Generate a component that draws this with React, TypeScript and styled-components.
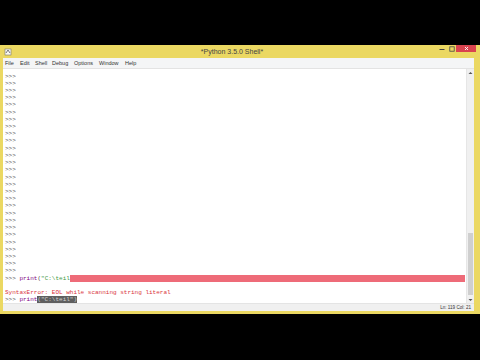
import React from "react";
import styled, { createGlobalStyle } from "styled-components";

const Global = createGlobalStyle`
  html, body { margin: 0; padding: 0; background: #000; }
  body { width: 480px; height: 360px; overflow: hidden; font-family: "Liberation Sans", Arial, sans-serif; }
`;

const Screen = styled.div`
  width: 480px;
  height: 360px;
  background: #000;
  display: flex;
  flex-direction: column;
  padding-top: 45px;
  box-sizing: border-box;
`;

const Window = styled.div`
  height: 269px;
  background: #ebd862;
  display: flex;
  flex-direction: column;
  padding: 0 6px 3px 3px;
  box-sizing: border-box;
`;

const TitleBar = styled.div`
  height: 13px;
  display: flex;
  align-items: center;
  flex: none;
`;

const Title = styled.div`
  flex: 1;
  text-align: center;
  font-size: 7px;
  color: #444;
  padding-left: 16px;
`;

const Controls = styled.div`
  display: flex;
  align-items: flex-start;
  height: 13px;
  margin-right: -2px;
`;

const CtlBtn = styled.div<{ $w: number; $red?: boolean }>`
  width: ${(p) => p.$w}px;
  height: 7px;
  background: ${(p) => (p.$red ? "#d9434f" : "transparent")};
  display: flex;
  align-items: center;
  justify-content: center;
`;

const Menu = styled.div`
  height: 11px;
  background: #f4f5f6;
  border-bottom: 1px solid #e3e3e3;
  display: flex;
  align-items: center;
  padding-left: 2px;
  box-sizing: border-box;
  flex: none;
`;

const MenuItem = styled.span<{ $w: number }>`
  width: ${(p) => p.$w}px;
  font-size: 5.5px;
  color: #333;
`;

const Body = styled.div`
  flex: 1;
  display: flex;
  background: #fff;
  min-height: 0;
`;

const Text = styled.div`
  flex: 1;
  padding: 3.5px 0 0 2px;
  font-family: "Liberation Mono", "Courier New", monospace;
  font-size: 6px;
  line-height: 7.22px;
  color: #4a4a4a;
  overflow: hidden;
  white-space: pre;
`;

const Line = styled.div`
  height: 7.22px;
  display: flex;
`;

const Err = styled.span`
  flex: 1;
  background: #ee6b78;
  margin-right: 1px;
`;

const Kw = styled.span`
  color: #800080;
`;
const Str = styled.span`
  color: #3f9a3f;
`;
const Red = styled.span`
  color: #d9323a;
`;
const Sel = styled.span`
  background: #5f5f5f;
  color: #d0d0d0;
`;

const Scroll = styled.div`
  width: 7px;
  background: #f0f0f0;
  display: flex;
  flex-direction: column;
  align-items: center;
  border-left: 1px solid #e6e6e6;
`;

const Arrow = styled.div`
  height: 7px;
  display: flex;
  align-items: center;
  justify-content: center;
`;

const Thumb = styled.div`
  width: 5px;
  height: 62px;
  background: #cfcfcf;
  margin-top: auto;
  margin-bottom: 1px;
`;

const Status = styled.div`
  height: 8px;
  background: #f0f0f0;
  display: flex;
  align-items: center;
  justify-content: flex-end;
  padding-right: 3px;
  font-size: 4.6px;
  color: #333;
  flex: none;
  border-top: 1px solid #e4e4e4;
  box-sizing: border-box;
`;

export default function App() {
  const prompts = Array.from({ length: 28 });
  return (
    <Screen>
      <Global />
      <Window>
        <TitleBar>
          <svg width="8" height="8" viewBox="0 0 8 8" style={{ marginLeft: 1 }}>
            <rect x="1" y="1" width="6" height="6" fill="#fafaf0" stroke="#777" strokeWidth="0.6" />
            <path d="M2 5 L4 2 L6 5" stroke="#556" strokeWidth="0.8" fill="none" />
          </svg>
          <Title>*Python 3.5.0 Shell*</Title>
          <Controls>
            <CtlBtn $w={12}>
              <svg width="6" height="6" viewBox="0 0 6 6">
                <rect x="0.5" y="3" width="5" height="1" fill="#444" />
              </svg>
            </CtlBtn>
            <CtlBtn $w={8}>
              <svg width="6" height="6" viewBox="0 0 6 6">
                <rect x="0.8" y="0.8" width="4.4" height="4.4" fill="none" stroke="#444" strokeWidth="0.8" />
              </svg>
            </CtlBtn>
            <CtlBtn $w={20} $red>
              <svg width="5" height="5" viewBox="0 0 5 5">
                <path d="M1 1 L4 4 M4 1 L1 4" stroke="#fff" strokeWidth="0.9" />
              </svg>
            </CtlBtn>
          </Controls>
        </TitleBar>
        <Menu>
          <MenuItem $w={15}>File</MenuItem>
          <MenuItem $w={15}>Edit</MenuItem>
          <MenuItem $w={17}>Shell</MenuItem>
          <MenuItem $w={22}>Debug</MenuItem>
          <MenuItem $w={25}>Options</MenuItem>
          <MenuItem $w={26}>Window</MenuItem>
          <MenuItem $w={20}>Help</MenuItem>
        </Menu>
        <Body>
          <Text>
            {prompts.map((_, i) => (
              <Line key={i}>{">>>"}</Line>
            ))}
            <Line>
              {">>> "}
              <Kw>print</Kw>(<Str>"C:\teil</Str>
              <Err />
            </Line>
            <Line> </Line>
            <Line>
              <Red>SyntaxError: EOL while scanning string literal</Red>
            </Line>
            <Line>
              {">>> "}
              <Kw>print</Kw>
              <Sel>("C:\teil")</Sel>
            </Line>
          </Text>
          <Scroll>
            <Arrow>
              <svg width="5" height="4" viewBox="0 0 5 4">
                <path d="M0.5 3 L2.5 1 L4.5 3 Z" fill="#555" />
              </svg>
            </Arrow>
            <Thumb />
            <Arrow>
              <svg width="5" height="4" viewBox="0 0 5 4">
                <path d="M0.5 1 L2.5 3 L4.5 1 Z" fill="#555" />
              </svg>
            </Arrow>
          </Scroll>
        </Body>
        <Status>Ln: 119 Col: 21</Status>
      </Window>
    </Screen>
  );
}
